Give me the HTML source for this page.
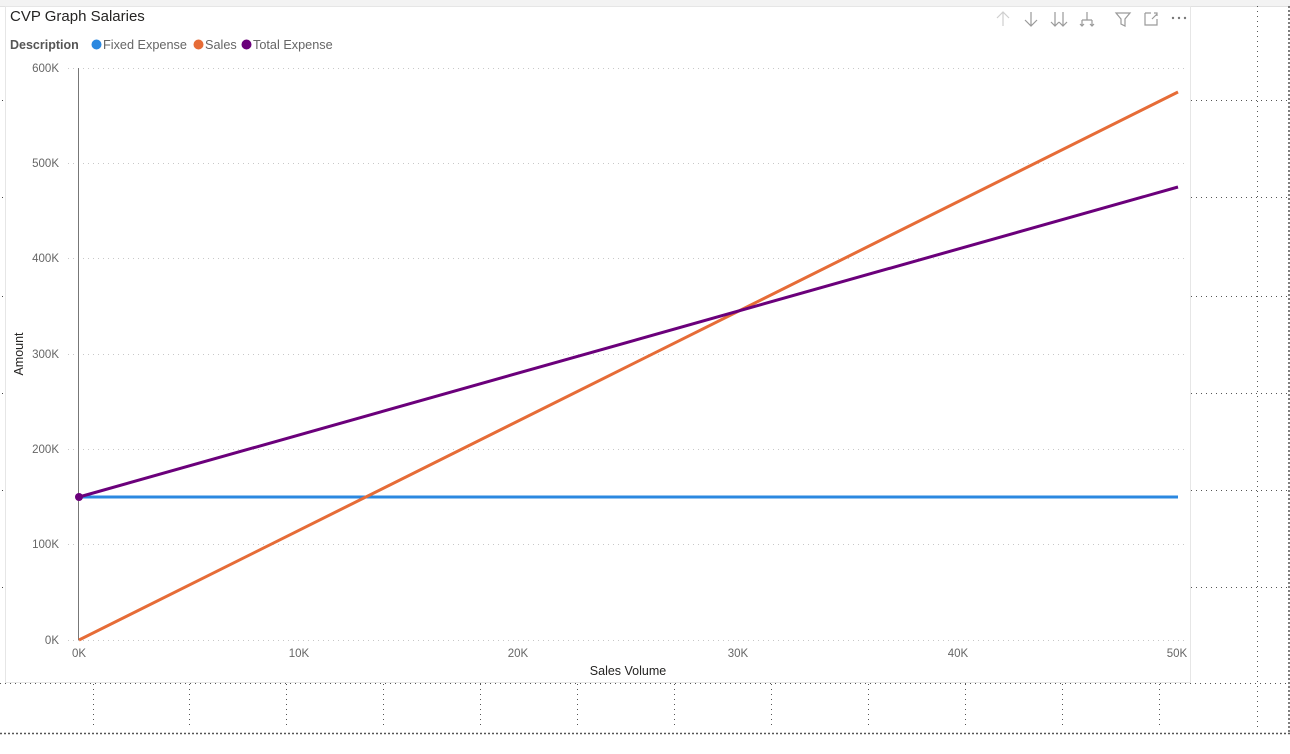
<!DOCTYPE html>
<html><head><meta charset="utf-8"><style>
html,body{margin:0;padding:0;width:1290px;height:754px;overflow:hidden;background:#fff;font-family:"Liberation Sans",sans-serif;}
.top{position:absolute;left:0;top:0;width:1290px;height:6px;background:#f3f3f3;border-bottom:1px solid #e1e1e1;}
svg{position:absolute;left:0;top:0}
</style></head><body>
<div class="top"></div>
<svg width="1290" height="754" xmlns="http://www.w3.org/2000/svg" font-family="Liberation Sans, sans-serif">
  <g stroke="#555" stroke-width="1" stroke-dasharray="1,4" fill="none">
    <line x1="1191" y1="100.5" x2="1290" y2="100.5"/>
    <line x1="1191" y1="197.5" x2="1290" y2="197.5"/>
    <line x1="1191" y1="296.5" x2="1290" y2="296.5"/>
    <line x1="1191" y1="393.5" x2="1290" y2="393.5"/>
    <line x1="1191" y1="490.5" x2="1290" y2="490.5"/>
    <line x1="1191" y1="587.5" x2="1290" y2="587.5"/>
    <line x1="0" y1="683.5" x2="1290" y2="683.5"/>
    <line x1="1257.5" y1="6" x2="1257.5" y2="728"/>
    <line x1="93.5" y1="684" x2="93.5" y2="728"/>
    <line x1="189.5" y1="684" x2="189.5" y2="728"/>
    <line x1="286.5" y1="684" x2="286.5" y2="728"/>
    <line x1="383.5" y1="684" x2="383.5" y2="728"/>
    <line x1="480.5" y1="684" x2="480.5" y2="728"/>
    <line x1="577.5" y1="684" x2="577.5" y2="728"/>
    <line x1="674.5" y1="684" x2="674.5" y2="728"/>
    <line x1="771.5" y1="684" x2="771.5" y2="728"/>
    <line x1="868.5" y1="684" x2="868.5" y2="728"/>
    <line x1="965.5" y1="684" x2="965.5" y2="728"/>
    <line x1="1062.5" y1="684" x2="1062.5" y2="728"/>
    <line x1="1159.5" y1="684" x2="1159.5" y2="728"/>
  </g>
  <g fill="#444">
    <rect x="2" y="100" width="1" height="1"/><rect x="2" y="197" width="1" height="1"/>
    <rect x="2" y="296" width="1" height="1"/><rect x="2" y="393" width="1" height="1"/>
    <rect x="2" y="490" width="1" height="1"/><rect x="2" y="587" width="1" height="1"/>
  </g>
  <g stroke="#555" stroke-width="1.5" stroke-dasharray="2,2" fill="none">
    <line x1="0" y1="733.5" x2="1290" y2="733.5"/>
    <line x1="1289" y1="6" x2="1289" y2="734"/>
  </g>
  <rect x="5.5" y="6.5" width="1185" height="676" fill="#fff" stroke="#e6e6e6"/>
  <text x="10" y="21" font-size="15" fill="#252423">CVP Graph Salaries</text>
  <g stroke="#9a9a9a" stroke-width="1.2" fill="none">
    <path d="M1003 26V12M997 18l6-6 6 6" stroke="#cfcfcf"/>
    <path d="M1031 12v14M1025 20l6 6 6-6"/>
    <path d="M1055 12v14M1051 22l4 4 4-4M1063 12v14M1059 22l4 4 4-4"/>
    <path d="M1087 12v8M1082 20h10M1082 20v6M1092 20v6M1080 24l2 2 2-2M1090 24l2 2 2-2"/>
    <path d="M1116 13h14l-5 6v7l-4-2v-5z"/>
    <path d="M1145 13h6M1145 13v12h12v-6M1152 19l5-5M1154 13h3v3"/>
  </g>
  <g fill="#777"><circle cx="1173" cy="18" r="1.2"/><circle cx="1179" cy="18" r="1.2"/><circle cx="1185" cy="18" r="1.2"/></g>
  <text x="10" y="49" font-size="12.5" font-weight="bold" fill="#555">Description</text>
  <circle cx="96.5" cy="44.5" r="5" fill="#2b88e0"/>
  <text x="103" y="49" font-size="12.7" fill="#666">Fixed Expense</text>
  <circle cx="198.5" cy="44.5" r="5" fill="#e66c37"/>
  <text x="205" y="49" font-size="12.7" fill="#666">Sales</text>
  <circle cx="246.5" cy="44.5" r="5" fill="#6b007b"/>
  <text x="253" y="49" font-size="12.7" fill="#666">Total Expense</text>
  <g stroke="#c8c8c8" stroke-width="1" stroke-dasharray="1,4">
    <line x1="68" y1="68.5" x2="1188" y2="68.5"/>
    <line x1="68" y1="163.5" x2="1188" y2="163.5"/>
    <line x1="68" y1="258.5" x2="1188" y2="258.5"/>
    <line x1="68" y1="354.5" x2="1188" y2="354.5"/>
    <line x1="68" y1="449.5" x2="1188" y2="449.5"/>
    <line x1="68" y1="544.5" x2="1188" y2="544.5"/>
    <line x1="68" y1="640.5" x2="1188" y2="640.5"/>
  </g>
  <g font-size="11.5" fill="#666" text-anchor="end">
    <text x="59" y="72">600K</text>
    <text x="59" y="167">500K</text>
    <text x="59" y="262">400K</text>
    <text x="59" y="358">300K</text>
    <text x="59" y="453">200K</text>
    <text x="59" y="548">100K</text>
    <text x="59" y="644">0K</text>
  </g>
  <text transform="translate(23,354) rotate(-90)" font-size="12.5" fill="#252423" text-anchor="middle">Amount</text>
  <g font-size="11.5" fill="#666" text-anchor="middle">
    <text x="79" y="657">0K</text>
    <text x="299" y="657">10K</text>
    <text x="518" y="657">20K</text>
    <text x="738" y="657">30K</text>
    <text x="958" y="657">40K</text>
    <text x="1177" y="657">50K</text>
  </g>
  <text x="628" y="675" font-size="12.5" fill="#252423" text-anchor="middle">Sales Volume</text>
  <line x1="78.5" y1="68" x2="78.5" y2="640" stroke="#777" stroke-width="1"/>
  <line x1="79" y1="497" x2="1178" y2="497" stroke="#2b88e0" stroke-width="3"/>
  <line x1="79" y1="640" x2="1178" y2="92" stroke="#e66c37" stroke-width="3"/>
  <line x1="79" y1="497" x2="1178" y2="187" stroke="#6b007b" stroke-width="3"/>
  <circle cx="79" cy="497" r="4" fill="#6b007b"/>
</svg>
</body></html>
